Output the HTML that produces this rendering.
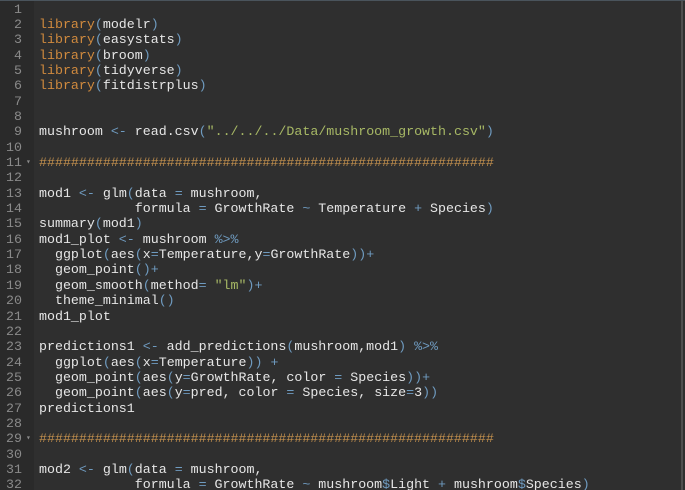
<!DOCTYPE html>
<html><head><meta charset="utf-8"><style>
html,body{margin:0;padding:0;width:685px;height:490px;overflow:hidden;background:#2f2f2f;}
#w{position:relative;width:685px;height:490px;overflow:hidden;}
#top{position:absolute;left:0;top:0;width:685px;height:1px;background:#4a545c;}
#gut{position:absolute;left:0;top:1px;width:34px;height:489px;background:#2a2a2a;}
#rb{position:absolute;left:681px;top:1px;width:2px;height:489px;background:#4e4e4e;}
.l{position:absolute;left:0;height:15px;width:680px;font-family:"Liberation Mono",monospace;font-size:13.3px;line-height:15px;color:#e6e6e6;white-space:pre;}
.n{position:absolute;left:0;width:22px;text-align:right;color:#8a8a8a;}
.c{position:absolute;left:39px;}
.f{position:absolute;left:26px;color:#8a8a8a;font-size:8px;}
.k{color:#d08a3e}.p{color:#6f9bc0}.o{color:#6f9bc0}.s{color:#a7b865}.h{color:#c4914e}
</style></head><body><div id="w">
<div id="top"></div><div id="gut"></div><div id="rb"></div>
<div class="l" style="top:1.5px"><span class="n">1</span></div>
<div class="l" style="top:16.85px"><span class="n">2</span><span class="c"><span class="k">library</span><span class="p">(</span>modelr<span class="p">)</span></span></div>
<div class="l" style="top:32.2px"><span class="n">3</span><span class="c"><span class="k">library</span><span class="p">(</span>easystats<span class="p">)</span></span></div>
<div class="l" style="top:47.55px"><span class="n">4</span><span class="c"><span class="k">library</span><span class="p">(</span>broom<span class="p">)</span></span></div>
<div class="l" style="top:62.9px"><span class="n">5</span><span class="c"><span class="k">library</span><span class="p">(</span>tidyverse<span class="p">)</span></span></div>
<div class="l" style="top:78.25px"><span class="n">6</span><span class="c"><span class="k">library</span><span class="p">(</span>fitdistrplus<span class="p">)</span></span></div>
<div class="l" style="top:93.6px"><span class="n">7</span></div>
<div class="l" style="top:108.95px"><span class="n">8</span></div>
<div class="l" style="top:124.3px"><span class="n">9</span><span class="c">mushroom <span class="o">&lt;-</span> read.csv<span class="p">(</span><span class="s">"../../../Data/mushroom_growth.csv"</span><span class="p">)</span></span></div>
<div class="l" style="top:139.65px"><span class="n">10</span></div>
<div class="l" style="top:155px"><span class="n">11</span><span class="f">&#9662;</span><span class="c h">#########################################################</span></div>
<div class="l" style="top:170.35px"><span class="n">12</span></div>
<div class="l" style="top:185.7px"><span class="n">13</span><span class="c">mod1 <span class="o">&lt;-</span> glm<span class="p">(</span>data <span class="o">=</span> mushroom,</span></div>
<div class="l" style="top:201.05px"><span class="n">14</span><span class="c">            formula <span class="o">=</span> GrowthRate <span class="o">~</span> Temperature <span class="o">+</span> Species<span class="p">)</span></span></div>
<div class="l" style="top:216.4px"><span class="n">15</span><span class="c">summary<span class="p">(</span>mod1<span class="p">)</span></span></div>
<div class="l" style="top:231.75px"><span class="n">16</span><span class="c">mod1_plot <span class="o">&lt;-</span> mushroom <span class="o">%&gt;%</span></span></div>
<div class="l" style="top:247.1px"><span class="n">17</span><span class="c">  ggplot<span class="p">(</span>aes<span class="p">(</span>x<span class="o">=</span>Temperature,y<span class="o">=</span>GrowthRate<span class="p">))</span><span class="o">+</span></span></div>
<div class="l" style="top:262.45px"><span class="n">18</span><span class="c">  geom_point<span class="p">()</span><span class="o">+</span></span></div>
<div class="l" style="top:277.8px"><span class="n">19</span><span class="c">  geom_smooth<span class="p">(</span>method<span class="o">=</span> <span class="s">"lm"</span><span class="p">)</span><span class="o">+</span></span></div>
<div class="l" style="top:293.15px"><span class="n">20</span><span class="c">  theme_minimal<span class="p">()</span></span></div>
<div class="l" style="top:308.5px"><span class="n">21</span><span class="c">mod1_plot</span></div>
<div class="l" style="top:323.85px"><span class="n">22</span></div>
<div class="l" style="top:339.2px"><span class="n">23</span><span class="c">predictions1 <span class="o">&lt;-</span> add_predictions<span class="p">(</span>mushroom,mod1<span class="p">)</span> <span class="o">%&gt;%</span></span></div>
<div class="l" style="top:354.55px"><span class="n">24</span><span class="c">  ggplot<span class="p">(</span>aes<span class="p">(</span>x<span class="o">=</span>Temperature<span class="p">))</span> <span class="o">+</span></span></div>
<div class="l" style="top:369.9px"><span class="n">25</span><span class="c">  geom_point<span class="p">(</span>aes<span class="p">(</span>y<span class="o">=</span>GrowthRate, color <span class="o">=</span> Species<span class="p">))</span><span class="o">+</span></span></div>
<div class="l" style="top:385.25px"><span class="n">26</span><span class="c">  geom_point<span class="p">(</span>aes<span class="p">(</span>y<span class="o">=</span>pred, color <span class="o">=</span> Species, size<span class="o">=</span>3<span class="p">))</span></span></div>
<div class="l" style="top:400.6px"><span class="n">27</span><span class="c">predictions1</span></div>
<div class="l" style="top:415.95px"><span class="n">28</span></div>
<div class="l" style="top:431.3px"><span class="n">29</span><span class="f">&#9662;</span><span class="c h">#########################################################</span></div>
<div class="l" style="top:446.65px"><span class="n">30</span></div>
<div class="l" style="top:462px"><span class="n">31</span><span class="c">mod2 <span class="o">&lt;-</span> glm<span class="p">(</span>data <span class="o">=</span> mushroom,</span></div>
<div class="l" style="top:477.35px"><span class="n">32</span><span class="c">            formula <span class="o">=</span> GrowthRate <span class="o">~</span> mushroom<span class="o">$</span>Light <span class="o">+</span> mushroom<span class="o">$</span>Species<span class="p">)</span></span></div>
</div></body></html>
